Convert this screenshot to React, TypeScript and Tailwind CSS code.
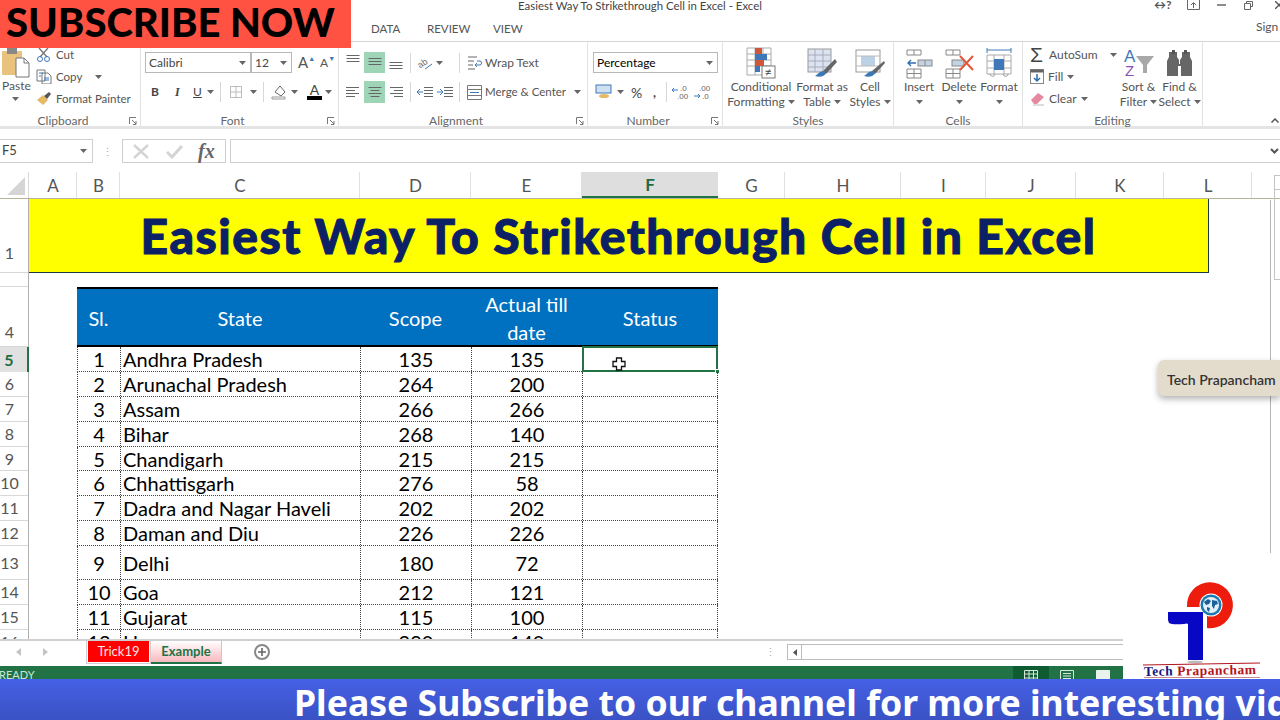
import React from "react";

type SvgProps = { children: React.ReactNode; w: number; h: number; className?: string };

const Svg = ({ children, w, h, className }: SvgProps) => (
  <svg width={w} height={h} viewBox={`0 0 ${w} ${h}`} className={className} fill="none">
    {children}
  </svg>
);

const Caret = ({ className = "" }: { className?: string }) => (
  <svg width="7" height="4" viewBox="0 0 7 4" className={`shrink-0 ${className}`}>
    <path d="M0 0h7L3.5 4z" fill="#666" />
  </svg>
);

// horizontal text-lines icon used by the alignment buttons
const Lines = ({ widths, anchor }: { widths: number[]; anchor: "l" | "c" | "r" }) => (
  <Svg w={14} h={12}>
    {widths.map((wd, i) => {
      const x = anchor === "l" ? 0 : anchor === "c" ? (14 - wd) / 2 : 14 - wd;
      return <path key={i} d={`M${x} ${1.5 + i * 3}h${wd}`} stroke="#666" />;
    })}
  </Svg>
);

const VSep = ({ className = "" }: { className?: string }) => (
  <div className={`w-px h-[20px] bg-[#d8d8d8] shrink-0 ${className}`} />
);

const Group = ({
  w,
  label,
  launcher = true,
  children,
}: {
  w: string;
  label: string;
  launcher?: boolean;
  children: React.ReactNode;
}) => (
  <div className={`${w} shrink-0 h-full flex flex-col border-r border-[#e2e2e2]`}>
    <div className="h-[72px] shrink-0 relative">{children}</div>
    <div className={`flex items-center h-[14px] relative ${launcher ? "pr-[14px]" : ""}`}>
      <span className="flex-1 text-center text-[12px] leading-[14px] text-[#666]">{label}</span>
      {launcher && (
        <svg width="8" height="8" viewBox="0 0 8 8" className="absolute right-[3px] top-[3px]">
          <path d="M.5 7V.5H7M3 3l4 4M7 4v3.5H4" stroke="#777" fill="none" />
        </svg>
      )}
    </div>
  </div>
);

const BigButton = ({
  w,
  icon,
  lines,
  caretInline = true,
}: {
  w: string;
  icon: React.ReactNode;
  lines: string[];
  caretInline?: boolean;
}) => (
  <div className={`${w} flex flex-col items-center shrink-0 text-[12px] leading-[15px] text-[#555]`}>
    <div className="h-[32px] flex items-end">{icon}</div>
    <div className="whitespace-nowrap">{lines[0]}</div>
    {caretInline ? (
      <div className="flex items-center gap-[3px] whitespace-nowrap">
        {lines[1]}
        <Caret />
      </div>
    ) : (
      <div className="h-[15px] flex items-center">
        <Caret />
      </div>
    )}
  </div>
);

const PasteIcon = () => (
  <Svg w={28} h={30}>
    <rect x="0" y="3" width="20" height="24" rx="1" fill="#e9c27e" />
    <rect x="5" y="0" width="10" height="6" fill="#888" />
    <path d="M14 10h8l5 5v14H14z" fill="#fff" stroke="#777" />
    <path d="M22 10v5h5" stroke="#777" />
  </Svg>
);

const CondIcon = () => (
  <Svg w={30} h={32}>
    <path d="M1 1h24v27H1zM1 7h24M1 13h24M1 19h24M9 1v27M17 1v27" stroke="#aaa" />
    <rect x="9" y="1" width="7" height="6" fill="#d0563a" />
    <rect x="9" y="7" width="12" height="6" fill="#3f78b8" />
    <rect x="9" y="13" width="9" height="6" fill="#d0563a" />
    <rect x="9" y="19" width="5" height="6" fill="#3f78b8" />
    <rect x="16" y="19" width="13" height="12" fill="#fff" stroke="#777" />
    <text x="19" y="29" fontSize="11" fill="#444" fontFamily="Liberation Sans">≠</text>
  </Svg>
);

const TableIcon = () => (
  <Svg w={30} h={32}>
    <rect x="1" y="2" width="23" height="23" fill="#dbe3f0" stroke="#999" />
    <path d="M1 8h23M1 14h23M1 20h23M8 2v23M16 2v23" stroke="#aab" />
    <path d="M28 12L16 24l3 3 11-12z" fill="#666" />
    <path d="M17 24c-4 0-6 3-9 5 5 2 10 0 11-3z" fill="#3b78b5" />
  </Svg>
);

const CellIcon = () => (
  <Svg w={30} h={32}>
    <rect x="1" y="3" width="24" height="22" fill="#fff" stroke="#999" />
    <rect x="6" y="9" width="14" height="10" fill="#bcd0e6" />
    <path d="M1 9h24M1 19h24" stroke="#bbb" />
    <path d="M29 14L17 24l3 3 10-11z" fill="#666" />
    <path d="M18 24c-4 0-6 3-9 5 5 2 10 0 11-3z" fill="#3b78b5" />
  </Svg>
);

const InsertIcon = () => (
  <Svg w={27} h={30}>
    <path d="M1 1h14v5H1zM8 1v5M1 20h14v9H1zM1 24.5h14M8 20v9" stroke="#888" />
    <rect x="12" y="11" width="14" height="6" fill="#c4d3e4" stroke="#888" />
    <path d="M19 11v6" stroke="#888" />
    <path d="M10 14H2M5 11l-3 3 3 3" stroke="#2f6fb0" strokeWidth="1.4" />
  </Svg>
);

const DeleteIcon = () => (
  <Svg w={29} h={30}>
    <path d="M1 1h14v5H1zM8 1v5M1 20h14v9H1zM1 24.5h14M8 20v9" stroke="#888" />
    <rect x="7" y="11" width="12" height="6" fill="#c4d3e4" stroke="#888" />
    <path d="M15 7l13 14M28 7L15 21" stroke="#e0573c" strokeWidth="2" />
  </Svg>
);

const FormatIcon = () => (
  <Svg w={28} h={32}>
    <path d="M2 3h24M2 1v5M26 1v5" stroke="#3f78b8" />
    <path d="M2 8h24v19H2zM2 14h24M2 21h24M9 8v19M19 8v19" stroke="#aaa" />
    <rect x="9" y="12" width="10" height="11" fill="#3f78b8" />
    <path d="M5 27c0 3 5 3 5 0M18 27c0 3 5 3 5 0" stroke="#999" />
  </Svg>
);

const SortIcon = () => (
  <Svg w={30} h={32}>
    <text x="0" y="15" fontSize="17" fill="#3f78b8" fontFamily="Liberation Sans">A</text>
    <text x="1" y="29" fontSize="15" fill="#8b4fb8" fontFamily="Liberation Sans">Z</text>
    <path d="M12 9h18l-7 9v8h-4v-8z" fill="#a8a8a8" />
  </Svg>
);

const FindIcon = () => (
  <Svg w={27} h={30}>
    <path d="M3 3h8v5l2 3v4h1v-4l2-3V3h8v5l2 4v15H15V17h-3v10H1V12l2-4z" fill="#666" />
    <path d="M6 1h3v4H6zM18 1h3v4h-3z" fill="#555" />
  </Svg>
);

const Combo = ({ w, text, dark }: { w: string; text: string; dark?: boolean }) => (
  <div className={`${w} h-[21px] border border-[#b8b8b8] bg-white flex items-center justify-between pl-[3px] pr-[4px] text-[12px] ${dark ? "text-black" : "text-[#444]"}`}>
    <span>{text}</span>
    <Caret />
  </div>
);

const Ribbon = () => (
  <div className="h-[88px] border-y border-[#d6d6d6] border-b-[3px] border-b-[#e4e4e4] flex text-[#555] bg-white shrink-0">
    <Group w="w-[141px]" label="Clipboard">
      <div className="flex h-full">
        <div className="w-[36px] pl-[2px] pt-[6px] flex flex-col items-start text-[12px] leading-[15px]">
          <PasteIcon />
          <span>Paste</span>
          <Caret className="ml-[10px] mt-[4px]" />
        </div>
        <div className="flex flex-col gap-[7px] pt-[5px] text-[11.5px] leading-[15px]">
          <div className="flex items-center gap-[4px]">
            <Svg w={16} h={15}>
              <path d="M3 1l8 9M12 1L4 10" stroke="#777" strokeWidth="1.3" />
              <circle cx="4" cy="12" r="2.5" stroke="#3f78b8" />
              <circle cx="11" cy="12" r="2.5" stroke="#3f78b8" />
            </Svg>
            <span>Cut</span>
          </div>
          <div className="flex items-center gap-[4px]">
            <Svg w={16} h={15}>
              <path d="M1 1h8v11H1zM6 4h6l3 3v8H6z" fill="#fff" stroke="#777" />
              <path d="M3 4h4M3 7h2M8 9h5M8 11h5" stroke="#3f78b8" />
            </Svg>
            <span>Copy</span>
            <Caret className="ml-[9px]" />
          </div>
          <div className="flex items-center gap-[4px]">
            <Svg w={16} h={15}>
              <path d="M1 9l6-5 5 5-5 5z" fill="#e6b964" />
              <path d="M8 5l5-4 2 2-4 5z" fill="#555" />
            </Svg>
            <span>Format Painter</span>
          </div>
        </div>
      </div>
    </Group>

    <Group w="w-[198px]" label="Font">
      <div className="pl-[4px] pt-[10px]">
        <div className="flex items-center">
          <Combo w="w-[106px]" text="Calibri" />
          <Combo w="w-[41px]" text="12" />
          <span className="ml-[6px] text-[15px] leading-none">A</span>
          <span className="text-[7px] text-[#3f78b8] mb-[8px]">▲</span>
          <span className="ml-[5px] text-[12px] leading-none">A</span>
          <span className="text-[7px] text-[#3f78b8] mb-[8px]">▼</span>
        </div>
        <div className="flex items-center mt-[8px] pl-[6px] h-[22px] text-[12px] text-[#444]">
          <span className="font-bold w-[24px]">B</span>
          <span className="italic font-['Liberation_Serif',serif] font-bold w-[18px]">I</span>
          <span className="underline w-[14px]">U</span>
          <Caret className="mr-[6px]" />
          <VSep />
          <Svg w={12} h={12} className="ml-[9px] mr-[5px]">
            <path d="M.5.5h11v11H.5zM6 .5v11M.5 6h11" stroke="#bbb" />
          </Svg>
          <Caret className="ml-[3px] mr-[6px]" />
          <VSep />
          <Svg w={17} h={16} className="ml-[7px] mr-[3px]">
            <path d="M4 8l5-6 5 6-4 4z" fill="#fff" stroke="#666" />
            <path d="M1 13h13v2H1z" fill="#fff" stroke="#999" />
          </Svg>
          <Caret className="mr-[9px]" />
          <div className="flex flex-col items-center w-[15px] mr-[3px]">
            <span className="text-[14px] leading-[12px]">A</span>
            <div className="w-[15px] h-[4px] bg-black" />
          </div>
          <Caret />
        </div>
      </div>
    </Group>

    <Group w="w-[249px]" label="Alignment">
      <div className="pl-[4px] pt-[10px]">
        <div className="flex items-center h-[21px]">
          <div className="w-[20px] flex justify-center pb-[6px]"><Lines widths={[13, 13, 13]} anchor="c" /></div>
          <div className="ml-[1px] w-[21px] h-[21px] bg-[#9fd5b7] flex items-center justify-center"><Lines widths={[13, 13, 13]} anchor="c" /></div>
          <div className="w-[22px] flex justify-center pt-[8px]"><Lines widths={[13, 13, 13]} anchor="c" /></div>
          <VSep className="ml-[3px]" />
          <Svg w={16} h={14} className="ml-[6px] mr-[3px]">
            <text x="1" y="10" fontSize="9" fill="#666" fontFamily="Liberation Sans" transform="rotate(-35 6 8)">ab</text>
            <path d="M8 13l7-5" stroke="#3f78b8" />
          </Svg>
          <Caret className="mr-[16px]" />
          <VSep />
          <Svg w={15} h={15} className="ml-[7px] mr-[3px]">
            <path d="M1 2h9M1 6h6M1 10h5M1 14h7" stroke="#666" />
            <path d="M10 6h3q1.500 0 1.500 2t-1.500 2H8M10 8l-2 2 2 2" stroke="#3f78b8" />
          </Svg>
          <span className="text-[12px]">Wrap Text</span>
        </div>
        <div className="flex items-center h-[22px] mt-[8px]">
          <div className="w-[20px] flex justify-center"><Lines widths={[13, 9, 13, 9]} anchor="l" /></div>
          <div className="ml-[1px] w-[21px] h-[22px] bg-[#9fd5b7] flex items-center justify-center"><Lines widths={[13, 9, 13, 9]} anchor="c" /></div>
          <div className="w-[22px] flex justify-center"><Lines widths={[13, 9, 13, 9]} anchor="r" /></div>
          <VSep className="ml-[3px]" />
          <Svg w={16} h={12} className="ml-[6px] mr-[4px]">
            <path d="M7 1.500h9M7 4.500h9M7 7.500h9M7 10.500h9" stroke="#666" />
            <path d="M6 6H0M3 3L0 6l3 3" stroke="#3f78b8" />
          </Svg>
          <Svg w={16} h={12} className="mr-[6px]">
            <path d="M7 1.500h9M7 4.500h9M7 7.500h9M7 10.500h9" stroke="#666" />
            <path d="M0 6h6M3 3l3 3-3 3" stroke="#3f78b8" />
          </Svg>
          <VSep />
          <Svg w={15} h={15} className="ml-[7px] mr-[3px]">
            <path d="M.5.500h14v14H.5zM.5 4.500h14M.5 10.500h14" stroke="#777" />
            <path d="M3 7.500h9" stroke="#3f78b8" />
          </Svg>
          <span className="text-[11.5px] whitespace-nowrap">Merge &amp; Center</span>
          <Caret className="ml-[8px]" />
        </div>
      </div>
    </Group>

    <Group w="w-[135px]" label="Number">
      <div className="pl-[5px] pt-[10px]">
        <Combo w="w-[125px]" text="Percentage" dark />
        <div className="flex items-center h-[22px] mt-[8px] pl-[2px]">
          <Svg w={17} h={16} className="mr-[5px]">
            <rect x="1" y="1" width="15" height="8" fill="#cfe0f0" stroke="#3f78b8" />
            <ellipse cx="9" cy="12" rx="5" ry="2" fill="#e6b964" />
          </Svg>
          <Caret className="mr-[7px]" />
          <span className="w-[18px] text-[14px] text-[#444]">%</span>
          <span className="w-[13px] ml-[4px] text-[13px] font-bold leading-[10px] text-[#444]">,</span>
          <VSep className="mr-[2px]" />
          <Svg w={19} h={15} className="mr-[3px] ml-[2px]">
            <text x="9" y="6" fontSize="8" fill="#666" fontFamily="Liberation Sans">.0</text>
            <text x="6" y="14" fontSize="8" fill="#666" fontFamily="Liberation Sans">.00</text>
            <path d="M7 5H1M3 3L1 5l2 2" stroke="#3f78b8" />
          </Svg>
          <Svg w={19} h={15}>
            <text x="6" y="6" fontSize="8" fill="#666" fontFamily="Liberation Sans">.00</text>
            <text x="9" y="14" fontSize="8" fill="#666" fontFamily="Liberation Sans">.0</text>
            <path d="M1 11h6M5 9l2 2-2 2" stroke="#3f78b8" />
          </Svg>
        </div>
      </div>
    </Group>

    <Group w="w-[171px]" label="Styles" launcher={false}>
      <div className="flex pl-[3px] pt-[5px]">
        <BigButton w="w-[70px]" icon={<CondIcon />} lines={["Conditional", "Formatting"]} />
        <BigButton w="w-[52px]" icon={<TableIcon />} lines={["Format as", "Table"]} />
        <BigButton w="w-[44px]" icon={<CellIcon />} lines={["Cell", "Styles"]} />
      </div>
    </Group>

    <Group w="w-[129px]" label="Cells" launcher={false}>
      <div className="flex pl-[5px] pt-[5px]">
        <BigButton w="w-[40px]" icon={<InsertIcon />} lines={["Insert", ""]} caretInline={false} />
        <BigButton w="w-[40px]" icon={<DeleteIcon />} lines={["Delete", ""]} caretInline={false} />
        <BigButton w="w-[40px]" icon={<FormatIcon />} lines={["Format", ""]} caretInline={false} />
      </div>
    </Group>

    <Group w="w-[180px]" label="Editing" launcher={false}>
      <div className="flex pl-[7px] pt-[5px]">
        <div className="w-[88px] flex flex-col gap-[7px] text-[12px] leading-[15px]">
          <div className="flex items-center gap-[4px]">
            <span className="w-[15px] text-[21px] leading-[15px] text-[#444] font-['Liberation_Sans',sans-serif]">Σ</span>
            <span>AutoSum</span>
            <Caret className="ml-[8px]" />
          </div>
          <div className="flex items-center gap-[4px]">
            <Svg w={14} h={15}>
              <rect x=".5" y=".5" width="13" height="14" fill="#fff" stroke="#888" />
              <rect x=".5" y=".5" width="13" height="3" fill="#666" />
              <path d="M7 5v7M4 9l3 3 3-3" stroke="#2f6fb0" strokeWidth="1.5" />
            </Svg>
            <span>Fill</span>
            <Caret />
          </div>
          <div className="flex items-center gap-[4px]">
            <Svg w={15} h={14}>
              <path d="M1 8l7-7 6 4-7 7H4z" fill="#e48aa0" />
              <path d="M3 13h11" stroke="#bbb" />
            </Svg>
            <span>Clear</span>
            <Caret />
          </div>
        </div>
        <BigButton w="w-[41px]" icon={<SortIcon />} lines={["Sort &", "Filter"]} />
        <BigButton w="w-[41px]" icon={<FindIcon />} lines={["Find &", "Select"]} />
      </div>
    </Group>

    <div className="flex-1 flex items-end justify-end pr-[1px] pb-[3px]">
      <svg width="8" height="5" viewBox="0 0 8 5"><path d="M.5 4.500L4 1l3.500 3.500" stroke="#555" strokeWidth="1.5" fill="none" /></svg>
    </div>
  </div>
);

const FormulaBar = () => (
  <div className="flex items-stretch h-[24px] mt-[10px] shrink-0">
    <div className="w-[93px] border border-l-0 border-[#cfcfcf] flex items-center justify-between pl-[2px] pr-[5px] text-[13px] text-[#444]">
      <span>F5</span>
      <Caret />
    </div>
    <div className="w-[29px] flex items-center justify-center text-[#aaa] text-[11px] leading-none">⋮</div>
    <div className="w-[104px] border border-[#cfcfcf] flex items-center pl-[8px] gap-[14px]">
      <svg width="20" height="15" viewBox="0 0 20 15"><path d="M3 1l14 13M17 1L3 14" stroke="#d4d4d4" strokeWidth="2.4" /></svg>
      <svg width="19" height="15" viewBox="0 0 19 15"><path d="M2 8l5 5L17 2" stroke="#d4d4d4" strokeWidth="3" fill="none" /></svg>
      <span className="font-['Liberation_Serif',serif] italic font-bold text-[20px] leading-none text-[#666]">fx</span>
    </div>
    <div className="ml-[4px] flex-1 border border-r-0 border-[#cfcfcf] flex items-center justify-end pr-[1px]">
      <svg width="9" height="6" viewBox="0 0 9 6"><path d="M1 1l3.500 3.500L8 1" stroke="#555" strokeWidth="2" fill="none" /></svg>
    </div>
  </div>
);

const columns = [
  { name: "A", w: "w-[48px]" },
  { name: "B", w: "w-[43px]" },
  { name: "C", w: "w-[240px]" },
  { name: "D", w: "w-[111px]" },
  { name: "E", w: "w-[111px]" },
  { name: "F", w: "w-[136px]" },
  { name: "G", w: "w-[67px]" },
  { name: "H", w: "w-[116px]" },
  { name: "I", w: "w-[85px]" },
  { name: "J", w: "w-[90px]" },
  { name: "K", w: "w-[88px]" },
  { name: "L", w: "w-[88px]" },
];

const ColumnHeaders = () => (
  <div className="flex h-[36px] pt-[9px] shrink-0 text-[17px] text-[#555] border-b border-[#b5b59a]">
    <div className="w-[29px] shrink-0 flex items-end justify-end pb-[3px] pr-[3px] border-r border-[#d8d8d8]">
      <svg width="18" height="18" viewBox="0 0 18 18"><path d="M18 0v18H0z" fill="#d5d5d5" /></svg>
    </div>
    {columns.map((c) =>
      c.name === "F" ? (
        <div key={c.name} className={`${c.w} shrink-0 flex items-center justify-center pt-[2px] font-bold text-[#1d6b41] bg-[#dedede] border-b-2 border-[#217346]`}>
          {c.name}
        </div>
      ) : (
        <div key={c.name} className={`${c.w} shrink-0 flex items-center justify-center pt-[2px] pl-[1px] border-r border-[#e0e0e0]`}>
          {c.name}
        </div>
      )
    )}
  </div>
);

const rows = [
  { n: 5, h: "h-[25px]", sl: "1", state: "Andhra Pradesh", scope: "135", actual: "135" },
  { n: 6, h: "h-[25px]", sl: "2", state: "Arunachal Pradesh", scope: "264", actual: "200" },
  { n: 7, h: "h-[25px]", sl: "3", state: "Assam", scope: "266", actual: "266" },
  { n: 8, h: "h-[25px]", sl: "4", state: "Bihar", scope: "268", actual: "140" },
  { n: 9, h: "h-[24px]", sl: "5", state: "Chandigarh", scope: "215", actual: "215" },
  { n: 10, h: "h-[25px]", sl: "6", state: "Chhattisgarh", scope: "276", actual: "58" },
  { n: 11, h: "h-[25px]", sl: "7", state: "Dadra and Nagar Haveli", scope: "202", actual: "202" },
  { n: 12, h: "h-[25px]", sl: "8", state: "Daman and Diu", scope: "226", actual: "226" },
  { n: 13, h: "h-[34px]", sl: "9", state: "Delhi", scope: "180", actual: "72" },
  { n: 14, h: "h-[25px]", sl: "10", state: "Goa", scope: "212", actual: "121" },
  { n: 15, h: "h-[25px]", sl: "11", state: "Gujarat", scope: "115", actual: "100" },
  { n: 16, h: "h-[25px]", sl: "12", state: "Haryana", scope: "290", actual: "140" },
];

const RowHeaders = () => (
  <div className="w-[29px] shrink-0 border-r border-[#b0b0b0] text-[16px] text-[#555] flex flex-col">
    <div className="h-[74px] shrink-0 flex items-end justify-center pr-[9px] pb-[7px] border-b border-[#d8d8d8]">1</div>
    <div className="h-[14px] shrink-0 border-b border-[#d8d8d8]" />
    <div className="h-[60px] shrink-0 flex items-end justify-center pr-[9px] pb-[2px] border-b border-[#d8d8d8]">4</div>
    {rows.map((r) =>
      r.n === 5 ? (
        <div key={r.n} className={`${r.h} shrink-0 flex items-center justify-center pr-[9px] font-bold text-[#1d6b41] bg-[#e1e1e1] -mr-px border-r-2 border-[#217346]`}>
          {r.n}
        </div>
      ) : (
        <div key={r.n} className={`${r.h} shrink-0 flex items-center justify-center pr-[9px] border-b border-[#d8d8d8]`}>
          {r.n}
        </div>
      )
    )}
  </div>
);

const DataTable = () => (
  <div className="w-[641px] ml-[48px] text-[20px] text-black">
    <div className="h-[60px] flex bg-[#0070c0] border-y-2 border-black text-white text-[20px] leading-[28px] pt-[2px]">
      <div className="w-[43px] flex items-center justify-center">Sl.</div>
      <div className="w-[240px] flex items-center justify-center">State</div>
      <div className="w-[111px] flex items-center justify-center">Scope</div>
      <div className="w-[111px] flex items-center justify-center text-center">Actual till<br />date</div>
      <div className="w-[136px] flex items-center justify-center">Status</div>
    </div>
    {rows.map((r) => (
      <div key={r.n} className={`${r.h} flex border-b border-l border-dotted border-[#444]`}>
        <div className="w-[43px] shrink-0 flex items-center justify-center border-r border-dotted border-[#444]">{r.sl}</div>
        <div className="w-[240px] shrink-0 flex items-center pl-[2px] border-r border-dotted border-[#444]">{r.state}</div>
        <div className="w-[111px] shrink-0 flex items-center justify-center border-r border-dotted border-[#444]">{r.scope}</div>
        <div className="w-[111px] shrink-0 flex items-center justify-center border-r border-dotted border-[#444]">{r.actual}</div>
        <div className="flex-1 border-r border-dotted border-[#444] relative">
          {r.n === 5 && (
            <>
              <div className="absolute -left-px -top-px -right-px -bottom-px border-2 border-[#217346]" />
              <div className="absolute -right-[3px] -bottom-[3px] w-[5px] h-[5px] bg-[#217346] border border-white" />
              <svg width="14" height="14" viewBox="0 0 14 14" className="absolute left-[29px] top-[10px]">
                <path d="M4.500 1h5v3.500H13v5H9.500V13h-5V9.500H1v-5h3.500z" fill="#fff" stroke="#111" strokeWidth="1.3" />
              </svg>
            </>
          )}
        </div>
      </div>
    ))}
  </div>
);

const Sheet = () => (
  <div className="h-[440px] flex overflow-hidden shrink-0 relative">
    <RowHeaders />
    <div className="flex-1 flex flex-col">
      <div className="w-[1180px] h-[74px] bg-[#ffff00] border-b border-r border-[#1c3b4a] flex items-center justify-center shrink-0">
        <span className="font-black text-[48px] leading-none tracking-[1.5px] [-webkit-text-stroke:1px_#0c2066] text-[#0c2066] whitespace-nowrap">
          Easiest Way To Strikethrough Cell in Excel
        </span>
      </div>
      <div className="h-[14px] shrink-0" />
      <DataTable />
    </div>
    <div className="w-[1px] h-[353px] bg-[#b5b5b5] mt-[1px] mr-[3px] shrink-0" />
    <div className="w-[6px] shrink-0" />
  </div>
);

const SheetTabs = () => (
  <div className="h-[27px] border-t-2 border-[#d0d0d0] flex items-start shrink-0 bg-white text-[13px] leading-none">
    <div className="w-[87px] h-[22px] flex items-center shrink-0 pl-[16px] gap-[22px] text-[#bbb]">
      <svg width="5" height="8" viewBox="0 0 5 8"><path d="M5 0v8L0 4z" fill="#c4c4c4" /></svg>
      <svg width="5" height="8" viewBox="0 0 5 8"><path d="M0 0v8l5-4z" fill="#c4c4c4" /></svg>
    </div>
    <div className="w-[63px] h-[22px] bg-[#ff0000] text-[#ffe4e4] flex items-center justify-center border-x border-b border-white shadow-[0_0_0_1px_#cfcfcf] shrink-0">
      Trick19
    </div>
    <div className="w-[71px] h-[23px] ml-[1px] bg-gradient-to-b from-white to-[#f8b8bf] border-r border-[#c8c8c8] border-b-2 border-b-[#217346] text-[#217346] font-bold flex items-center justify-center shrink-0">
      Example
    </div>
    <div className="ml-[32px] mt-[3px] w-[16px] h-[16px] rounded-full border-2 border-[#888] flex items-center justify-center shrink-0">
      <svg width="8" height="8" viewBox="0 0 8 8"><path d="M4 0v8M0 4h8" stroke="#666" strokeWidth="1.6" /></svg>
    </div>
    <div className="ml-[495px] mt-[5px] text-[#aaa] text-[11px] leading-none shrink-0">⋮</div>
    <div className="ml-[11px] mt-[3px] w-[336px] h-[16px] border-y border-[#bcbcbc] flex shrink-0">
      <div className="w-[15px] border-x border-[#bcbcbc] flex items-center justify-center">
        <svg width="4" height="7" viewBox="0 0 4 7"><path d="M4 0v7L0 3.500z" fill="#555" /></svg>
      </div>
    </div>
  </div>
);

const StatusBar = () => (
  <div className="h-[13px] bg-[#217346] flex shrink-0 text-[11px] text-[#cfe5d8] pr-[157px]">
    <span className="leading-[13px] pt-[2px] -ml-[1px]">READY</span>
    <div className="flex-1" />
    <div className="w-[36px] bg-[#0f5c33] flex justify-center pt-[4px]">
      <svg width="14" height="12" viewBox="0 0 14 12"><path d="M.5.500h13v11H.5zM.5 4h13M.5 8h13M5 .5v11M9.500.5v11" stroke="#d5e8dd" fill="none" /></svg>
    </div>
    <div className="w-[36px] flex justify-center pt-[4px]">
      <svg width="14" height="12" viewBox="0 0 14 12"><path d="M.5.500h13v11H.5zM3 3.500h8M3 6h8M3 8.500h8" stroke="#d5e8dd" fill="none" /></svg>
    </div>
    <div className="w-[36px] flex justify-center pt-[4px]">
      <svg width="14" height="12" viewBox="0 0 14 12"><path d="M.5.500h13v11H.5zM5 .5v11M9.500.5v11" stroke="#e8f3ec" fill="#e8f3ec" /></svg>
    </div>
    <div className="w-[2px]" />
  </div>
);

// channel logo block that covers the corner of the sheet
const LogoBlock = () => (
  <div className="absolute left-[1123px] top-[553px] w-[157px] h-[126px] bg-white overflow-hidden">
    <svg width="157" height="126" viewBox="1123 553 157 126" className="absolute left-0 top-0">
      <path d="M1187 607A23 23 0 1 1 1207 628V612L1200 607z" fill="#ee1c0c" />
      <circle cx="1211" cy="605" r="11.500" fill="#fff" />
      <circle cx="1211" cy="605" r="10.500" fill="#1b78b0" />
      <circle cx="1211" cy="605" r="8" fill="#dff0fa" />
      <path d="M1204 602l4-3 3 2-2 3-3 1zM1212 600l5 1 1 3-3 1-1 4-2-3zM1207 607l3 1-1 4-2-2z" fill="#1a5f96" />
      <path d="M1168 612h35v48h-15v-36q-1-1-4 0-12 1-15-1l-1-3z" fill="#0707c4" />
      <ellipse cx="1195" cy="662" rx="8" ry="1.500" fill="#bbb" />
      <path d="M1143 665l117-2" stroke="#b3141c" />
      <path d="M1144 677.500h116" stroke="#c98a8a" />
    </svg>
    <div className="absolute left-[21px] top-[111px] -rotate-1 font-['Liberation_Serif',serif] font-bold text-[13.5px] leading-[14px] whitespace-nowrap tracking-[0.5px]">
      <span className="text-[#14147e]">Tech </span>
      <span className="text-[#b3141c]">Prapancham</span>
    </div>
  </div>
);

export default function App() {
  return (
    <div className="relative w-[1280px] h-[720px] overflow-hidden bg-white flex flex-col font-['Lato',sans-serif]">
      <div className="h-[14px] shrink-0 flex justify-center text-[11.4px] leading-[12px] text-[#444]">
        Easiest Way To Strikethrough Cell in Excel - Excel
      </div>
      <div className="h-[27px] shrink-0 flex items-center text-[11.5px] text-[#555] pl-[371px] pt-[3px]">
        <span className="w-[56px]">DATA</span>
        <span className="w-[66px]">REVIEW</span>
        <span>VIEW</span>
        <span className="ml-auto mb-[4px] text-[12px] whitespace-nowrap w-[24px] overflow-hidden">Sign</span>
      </div>
      <Ribbon />
      <FormulaBar />
      <ColumnHeaders />
      <Sheet />
      <SheetTabs />
      <StatusBar />
      <div className="h-[41px] shrink-0 bg-gradient-to-b from-[#4660e6] to-[#3a52c4] pl-[294px] whitespace-nowrap overflow-hidden font-['Noto_Sans',sans-serif] font-bold text-[35.6px] leading-[46px] text-white">
        Please Subscribe to our channel for more interesting videos
      </div>

      {/* channel overlays */}
      <div className="absolute left-0 top-0 w-[351px] h-[48px] bg-[#ff5242] pl-[6px] font-black text-[40px] leading-[44px] text-black whitespace-nowrap">
        SUBSCRIBE NOW
      </div>
      <div className="absolute left-[1158px] top-[360px] w-[122px] h-[36px] rounded-l-md bg-[#e3dccd] shadow-[0_3px_6px_rgba(0,0,0,0.3)] flex items-center pl-[9px] pt-[2px] text-[14px] font-semibold text-[#333] whitespace-nowrap">
        Tech Prapancham
      </div>
      <LogoBlock />

      {/* window controls */}
      <div className="absolute left-[1154px] top-0 h-[10px] flex items-center text-[#555]">
        <span className="w-[33px] text-[12px] leading-[10px] font-bold">↔?</span>
        <svg width="13" height="10" viewBox="0 0 13 10" className="mr-[17px]"><path d="M.5 0v9.500h12V0M6.500 8V3M4 5l2.500-2.500L9 5" stroke="#666" fill="none" /></svg>
        <svg width="9" height="2" viewBox="0 0 9 2" className="mr-[18px]"><path d="M0 1h9" stroke="#666" strokeWidth="1.5" /></svg>
        <svg width="9" height="9" viewBox="0 0 9 9" className="mr-[22px]"><path d="M2.500 2V.5h6v5H7M.5 2.500h6v6h-6z" stroke="#666" fill="none" /></svg>
        <svg width="8" height="8" viewBox="0 0 8 8"><path d="M0 0l8 8M8 0L0 8" stroke="#555" strokeWidth="1.4" /></svg>
      </div>

      {/* vertical scrollbar top */}
      <div className="absolute left-[1274px] top-[175px] w-[6px] h-[105px] border border-r-0 border-[#c4c4c4] flex flex-col">
        <div className="h-[14px] border-b border-[#c4c4c4]" />
      </div>
    </div>
  );
}
